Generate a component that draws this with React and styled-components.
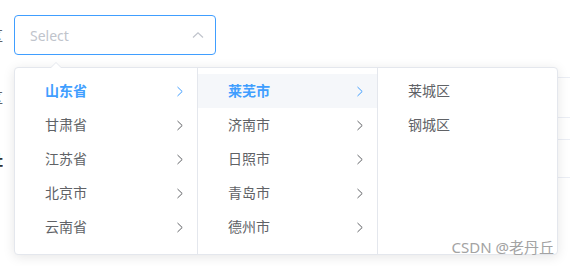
import React from "react";
import styled, { createGlobalStyle } from "styled-components";

const Global = createGlobalStyle`
  html, body { margin: 0; padding: 0; background: #fff; }
  body { font-family: "Noto Sans", "Noto Sans CJK SC", sans-serif; width: 570px; height: 266px; overflow: hidden; }
`;

const Page = styled.div`
  position: relative;
  width: 570px;
  height: 266px;
  overflow: hidden;
`;

const Row = styled.div`
  display: flex;
  align-items: center;
  height: ${(p) => p.$h}px;
  margin-top: ${(p) => p.$mt || 0}px;
`;

const Label = styled.div`
  width: 3px;
  overflow: hidden;
  display: flex;
  justify-content: flex-end;
  white-space: nowrap;
  font-size: 14px;
  color: ${(p) => (p.$strong ? "#303133" : "#606266")};
  font-weight: ${(p) => (p.$strong ? 700 : 400)};
  flex: none;
  margin-top: ${(p) => p.$dy || 0}px;
`;

const Field = styled.div`
  margin-left: 11px;
  flex: 1;
  display: flex;
  justify-content: flex-end;
  align-self: stretch;
`;

const Select = styled.div`
  margin-left: 11px;
  height: 38px;
  border: 1px solid #409eff;
  border-radius: 4px;
  display: flex;
  align-items: center;
  justify-content: space-between;
  padding: 0 11px 0 15px;
  box-sizing: content-box;
  width: 174px;
`;

const Placeholder = styled.span`
  font-size: 14px;
  color: #c0c4cc;
`;

const TableCell = styled.div`
  width: 20px;
  border-top: ${(p) => (p.$top ? "1px solid #ebeef5" : "none")};
  border-bottom: ${(p) => (p.$bottom ? "1px solid #ebeef5" : "none")};
  box-sizing: border-box;
`;

const Popper = styled.div`
  position: absolute;
  left: 14px;
  top: 67px;
  display: flex;
  background: #fff;
  border: 1px solid #e4e7ed;
  border-radius: 4px;
  box-shadow: 0 2px 12px 0 rgba(0, 0, 0, 0.1);
  height: 186px;
  &::before {
    content: "";
    position: absolute;
    left: 35px;
    top: -6px;
    width: 0;
    height: 0;
    border-left: 6px solid transparent;
    border-right: 6px solid transparent;
    border-bottom: 6px solid #e4e7ed;
  }
  &::after {
    content: "";
    position: absolute;
    left: 36px;
    top: -5px;
    width: 0;
    height: 0;
    border-left: 5px solid transparent;
    border-right: 5px solid transparent;
    border-bottom: 5px solid #fff;
  }
`;

const Menu = styled.ul`
  list-style: none;
  margin: 0;
  padding: 6px 0;
  width: ${(p) => p.$w}px;
  border-right: ${(p) => (p.$last ? "none" : "1px solid #e4e7ed")};
  box-sizing: content-box;
`;

const Node = styled.li`
  position: relative;
  height: 34px;
  line-height: 34px;
  padding: 0 30px;
  font-size: 14px;
  color: ${(p) => (p.$active ? "#409eff" : "#606266")};
  font-weight: ${(p) => (p.$active ? 700 : 400)};
  background: ${(p) => (p.$hover ? "#f5f7fa" : "transparent")};
  display: flex;
  align-items: center;
`;

const Postfix = styled.svg`
  position: absolute;
  right: 13px;
  top: 12px;
`;

const Watermark = styled.div`
  position: absolute;
  right: 16px;
  bottom: 9px;
  font-size: 15px;
  color: #a3a3a3;
`;

const Chevron = ({ color }) => (
  <Postfix width="8" height="11" viewBox="0 0 8 11">
    <polyline points="1.5,1 6.2,5.5 1.5,10" fill="none" stroke={color} strokeWidth="1" />
  </Postfix>
);

const cols = [
  { w: 182, items: ["山东省", "甘肃省", "江苏省", "北京市", "云南省"], active: 0, arrows: true },
  { w: 179, items: ["莱芜市", "济南市", "日照市", "青岛市", "德州市"], active: 0, hover: 0, arrows: true },
  { w: 179, items: ["莱城区", "钢城区"], arrows: false, last: true },
];

export default function App() {
  return (
    <>
      <Global />
      <Page>
        <Row $h={40} $mt={15}>
          <Label>地区</Label>
          <Select>
            <Placeholder>Select</Placeholder>
            <svg width="12" height="8" viewBox="0 0 12 8">
              <polyline points="1,6.5 6,1.8 11,6.5" fill="none" stroke="#c0c4cc" strokeWidth="1.2" />
            </svg>
          </Select>
        </Row>
        <Row $h={40} $mt={22}>
          <Label>市区</Label>
          <Field>
            <TableCell $top />
          </Field>
        </Row>
        <Row $h={22} $mt={0}>
          <Label />
          <Field>
            <TableCell $top />
          </Field>
        </Row>
        <Row $h={39} $mt={0}>
          <Label $strong>地址</Label>
          <Field>
            <TableCell $top $bottom />
          </Field>
        </Row>
        <Popper>
          {cols.map((c, ci) => (
            <Menu key={ci} $w={c.w} $last={c.last}>
              {c.items.map((t, i) => (
                <Node key={t} $active={c.active === i} $hover={c.hover === i}>
                  {t}
                  {c.arrows && <Chevron color={c.active === i ? "#409eff" : "#606266"} />}
                </Node>
              ))}
            </Menu>
          ))}
        </Popper>
        <Watermark>CSDN @老丹丘</Watermark>
      </Page>
    </>
  );
}
